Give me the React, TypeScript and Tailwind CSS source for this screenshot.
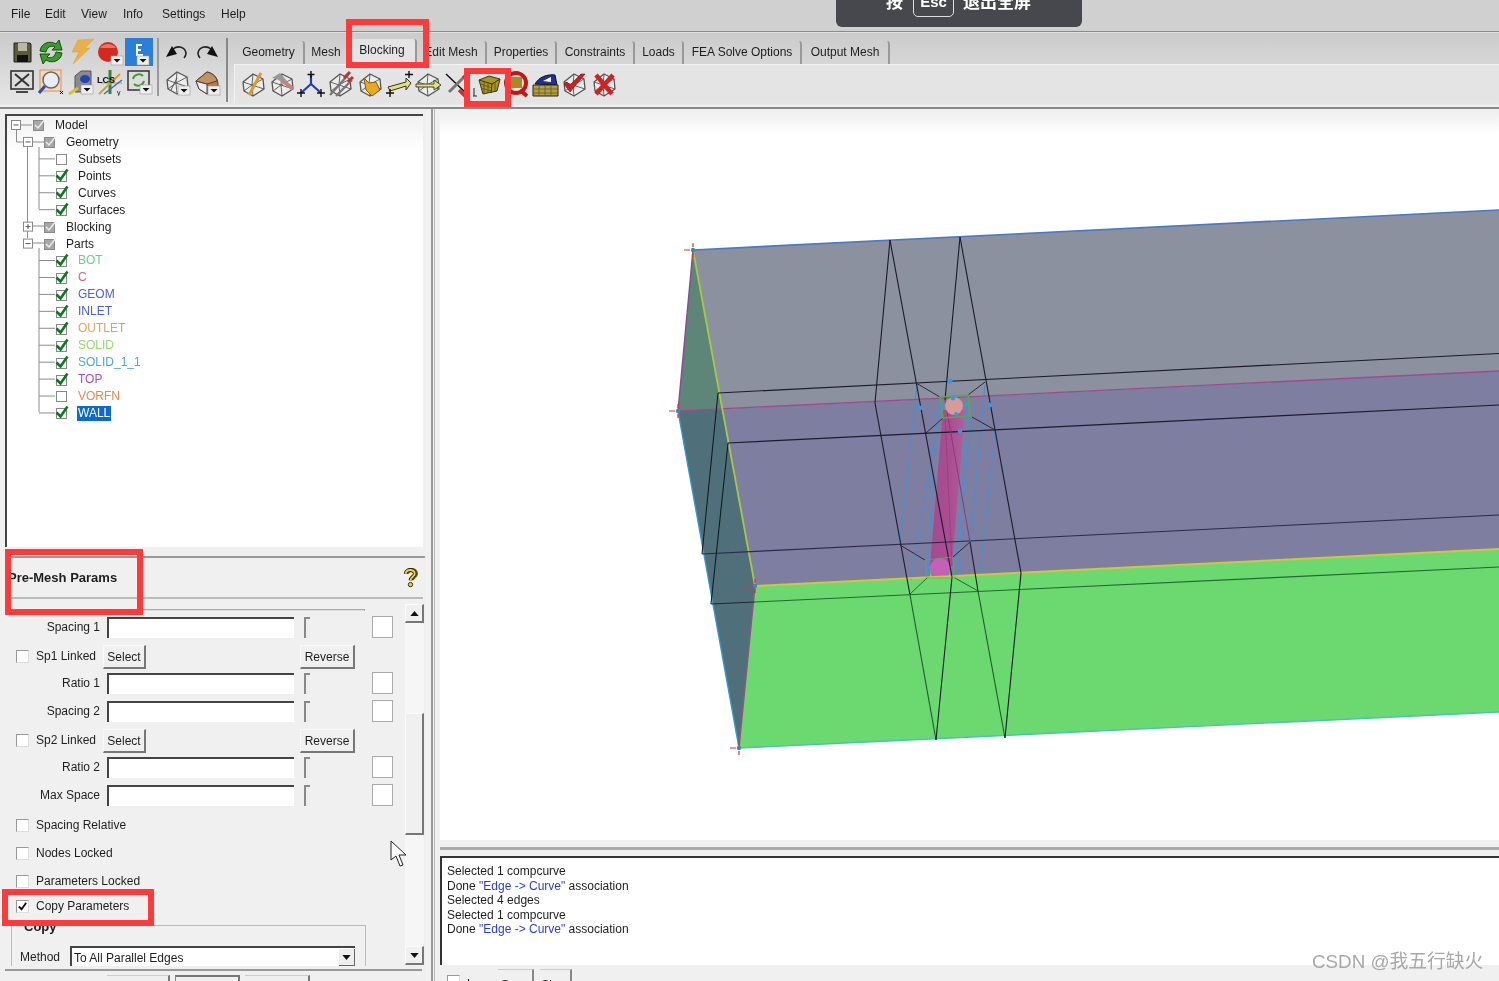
import React from "react";

const Wire = () => (
  <g fill="none" stroke="#555" strokeWidth="1.3" strokeLinejoin="round">
    <path d="M4 12 L14 4 L24 9 L25 19 L14 26 L5 21 Z" fill="#ececec" />
    <path d="M4 12 L13 15 L24 9 M13 15 L14 26 M14 4 L13 15 M5 21 L13 15 L25 19" strokeWidth="0.9" />
  </g>
);
const Drop = ({ x = 15, y = 17 }: { x?: number; y?: number }) => (
  <g>
    <rect x={x} y={y} width="12" height="9" fill="#eee" stroke="#999" strokeWidth="0.6" />
    <path d={`M${x + 2.5} ${y + 3} h7 l-3.5 3.5 z`} fill="#111" />
  </g>
);
const S = ({ children }: { children: React.ReactNode }) => (
  <svg viewBox="0 0 28 28" className="w-[28px] h-[28px] block">{children}</svg>
);

const topRow = [
  <S key="save"><path d="M6 5h16l1 1v18H6z" fill="#5b5a3a" stroke="#222" /><rect x="10" y="5" width="9" height="8" fill="#b9b9a0" /><rect x="9" y="17" width="11" height="7" fill="#111" /></S>,
  <S key="ref"><path d="M3 13 C4 5 13 2 19 6 L22 2 L25 12 L15 12 L18 9 C14 7 10 9 9 14 Z" fill="#3d9a2c" stroke="#12500f" /><path d="M25 15 C24 23 15 26 9 22 L6 26 L3 16 L13 16 L10 19 C14 21 18 19 19 14 Z" fill="#3d9a2c" stroke="#12500f" /></S>,
  <S key="bolt"><path d="M11 2 L27 1 L18 10 L23 10 L6 26 L12 14 L5 14 Z" fill="#e8b04a" stroke="#d8a040" strokeWidth="0.5" /></S>,
  <S key="rec"><circle cx="12" cy="14" r="10" fill="#d42a1e" /><path d="M4 10a10 10 0 0 1 16 0z" fill="#e8746a" /><Drop y={18} /></S>,
  <S key="e"><rect x="-1" width="29" height="28" fill="#2a7fd8" /><path d="M11 6h6v2h-4v3h3v2h-3v3h5v2h-7z" fill="#fff" /><Drop x={12} y={18} /></S>,
];
const botRow = [
  <S key="fit"><rect x="3" y="3" width="22" height="18" fill="#ddd" stroke="#333" strokeWidth="1.6" /><path d="M14 12 L7 6 M14 12 L21 6 M14 12 L7 18 M14 12 L21 18" stroke="#333" strokeWidth="2" /><rect x="8" y="23" width="12" height="2" fill="#444" /></S>,
  <S key="zoom"><rect x="3" y="2" width="21" height="21" fill="#f4d9b8" stroke="#d89060" /><circle cx="14" cy="12" r="8" fill="#e8edf2" stroke="#666" strokeWidth="1.5" /><path d="M8 18 L2 25" stroke="#2b4fb0" strokeWidth="3" /><path d="M23 23l3 3m0-3l-3 3" stroke="#111" /></S>,
  <S key="meas"><path d="M8 22 V8 L14 3 H24 V24 H8" fill="#8b8b8b" stroke="#555" /><ellipse cx="18" cy="11" rx="5" ry="4" fill="#1d45b5" /><path d="M2 26 L11 20" stroke="#d8c030" strokeWidth="3" /><Drop x={14} y={17} /></S>,
  <S key="lcs"><path d="M14 2V26" stroke="#2e8b2e" strokeWidth="3" /><path d="M3 26 L24 6" stroke="#d89a30" strokeWidth="2" /><path d="M5 15 H26" stroke="#999" /><path d="M8 26 L26 12" stroke="#5060c0" strokeWidth="1.5" /><text x="1" y="15" fontSize="9" fontWeight="700" fill="#111" fontFamily="Liberation Sans">LCS</text><text x="21" y="27" fontSize="7" fill="#111" fontFamily="Liberation Sans">y</text></S>,
  <S key="rb"><rect x="3" y="3" width="21" height="19" fill="#ddd" stroke="#333" strokeWidth="1.5" /><path d="M8 11a6 6 0 0 1 10-3M19 13a6 6 0 0 1-10 3" stroke="#3d9a2c" strokeWidth="2" fill="none" /><Drop y={17} /></S>,
];
const Arrow = ({ flip }: { flip?: boolean }) => (
  <S>
    <g transform={flip ? "matrix(-1 0 0 1 28 0)" : undefined}>
      <path d="M10 11 C15 7 22 9 23 15 C23 17 22 19 21 20" fill="none" stroke="#222" strokeWidth="1.6" />
      <path d="M3 19 L9 8 L14 16 Z" fill="#111" />
    </g>
  </S>
);
const wires = [
  <S key="w"><Wire /><g fill="none" stroke="#555" strokeWidth="1"><path d="M14 10 L8 22" /></g><Drop y={18} /></S>,
  <S key="s"><path d="M3 13 L14 4 C20 5 25 10 25 16 L25 22 L14 26 L6 21 Z" fill="#b87a40" stroke="#444" /><path d="M3 13 L14 16 L14 26 L6 21Z" fill="#eee" stroke="#444" /><path d="M14 4 C20 5 24 10 24 13 L14 16 L3 13Z" fill="#c8905a" stroke="#444" /><Drop y={18} /></S>,
];

const blockIcons = [
  <S key="1"><Wire /><path d="M22 3 L10 25" stroke="#d89a30" strokeWidth="3" /></S>,
  <S key="2"><Wire /><path d="M9 6 L25 19" stroke="#c98080" strokeWidth="4" /><path d="M4 8 L12 3 L20 12" fill="#999" /></S>,
  <S key="3"><path d="M14 14 L14 4 M14 14 L4 23 M14 14 L24 23" stroke="#1f3fb0" strokeWidth="2.2" fill="none" /><g stroke="#111" strokeWidth="1.4"><path d="M14 1v7M10.500 4.500h7M4 19v8M0 23h8M24 19v8M20 23h8" /></g></S>,
  <S key="4"><Wire /><path d="M4 25 L22 5 M10 26 L26 10" stroke="#777" strokeWidth="2.4" /><path d="M18 8 L24 2 M22 12 L27 7" stroke="#c83030" strokeWidth="3" /></S>,
  <S key="5"><Wire /><path d="M8 8 L13 13 L20 12 L24 20 L16 26 L10 20 Z" fill="#e8a820" stroke="#8a5a10" /></S>,
  <S key="6"><path d="M3 17 L21 12 L21 8 L26 13 L21 20 L21 16 L5 21Z" fill="#e8e070" stroke="#333" /><g stroke="#111" strokeWidth="1.4"><path d="M24 1v7M20 4.500h8M5 19v8M1 23h8" /></g></S>,
  <S key="7"><Wire /><path d="M2 14 H20 V10 L27 15 L20 20 V17 H2Z" fill="#e8e070" stroke="#444" /></S>,
  <S key="8"><path d="M3 4 L24 24" stroke="#111" strokeWidth="1.5" /><path d="M24 4 L6 22" stroke="#777" strokeWidth="3" /><path d="M20 8 L26 3" stroke="#c83030" strokeWidth="3.4" /><path d="M16 20 L22 26" stroke="#c83030" strokeWidth="3.4" /></S>,
  <S key="9"><path d="M6 10 L16 6 L27 9 L24 21 L10 24 Z" fill="#a89520" stroke="#333" /><path d="M6 10 L19 14 L27 9 M19 14 L18 23" stroke="#3a3510" fill="none" /><path d="M8 14 L19 18 M8 18 L18 21 M11 12 L11 24 M15 12 L15 23 M22 12 V22" stroke="#5d5210" fill="none" strokeWidth="0.8" /><path d="M1 18 V26 M-1 26 H4" stroke="#222" /></S>,
  <S key="10"><circle cx="14" cy="13" r="10" fill="none" stroke="#c01818" strokeWidth="4" /><path d="M18 20 L25 26" stroke="#c01818" strokeWidth="4" /><rect x="8" y="7" width="12" height="11" fill="#a88a20" /></S>,
  <S key="11"><path d="M4 14 C8 7 16 4 24 5 L26 15 Z" fill="#2030a0" stroke="#111" /><path d="M12 11 L20 7 L20 12 Z" fill="#fff" /><path d="M2 15 H27 V26 H2Z" fill="#b8a030" stroke="#222" /><path d="M2 19 H27 M2 23 H27 M8 15V26 M14 15V26 M20 15V26" stroke="#555" strokeWidth="0.8" /></S>,
  <S key="12"><Wire /><path d="M4 14 L10 22 L25 4 L21 4 L10 15 L7 12 Z" fill="#d01c1c" stroke="#7a0c0c" strokeWidth="0.6" /></S>,
  <S key="13"><Wire /><path d="M6 5 L22 24 M23 5 L6 24" stroke="#d42020" strokeWidth="4.500" /></S>,
];

const Check = ({ kind }: { kind: "on" | "off" | "tri" }) => (
  <svg viewBox="0 0 14 14" className="w-[14px] h-[14px] block overflow-visible">
    {kind === "tri" ? (
      <>
        <rect x="1.500" y="2.500" width="10" height="10" fill="#a7a7a7" stroke="#888" />
        <path d="M3 7 L6 10 L13 1" fill="none" stroke="#eee" strokeWidth="1.4" />
      </>
    ) : (
      <>
        <rect x="1.500" y="2.500" width="10" height="10" fill="#fff" stroke="#888" />
        {kind === "on" && <path d="M1.500 6.500 L5.500 10.500 L12.500 0.500" fill="none" stroke="#0a7a1c" strokeWidth="2.6" />}
      </>
    )}
  </svg>
);

type Node = { l: number; c: "on" | "off" | "tri"; t: string; color?: string; sel?: boolean };
const tree: Node[] = [
  { l: 0, c: "tri", t: "Model" },
  { l: 1, c: "tri", t: "Geometry" },
  { l: 2, c: "off", t: "Subsets" },
  { l: 2, c: "on", t: "Points" },
  { l: 2, c: "on", t: "Curves" },
  { l: 2, c: "on", t: "Surfaces" },
  { l: 1, c: "tri", t: "Blocking" },
  { l: 1, c: "tri", t: "Parts" },
  { l: 2, c: "on", t: "BOT", color: "#66d38a" },
  { l: 2, c: "on", t: "C", color: "#d9608c" },
  { l: 2, c: "on", t: "GEOM", color: "#4a5fd8" },
  { l: 2, c: "on", t: "INLET", color: "#4a5fd8" },
  { l: 2, c: "on", t: "OUTLET", color: "#d0aa5a" },
  { l: 2, c: "on", t: "SOLID", color: "#9ad86a" },
  { l: 2, c: "on", t: "SOLID_1_1", color: "#4aa8d8" },
  { l: 2, c: "on", t: "TOP", color: "#a050d0" },
  { l: 2, c: "off", t: "VORFN", color: "#e88a50" },
  { l: 2, c: "on", t: "WALL", sel: true },
];

const TreeLines = () => {
  const ys = (i: number) => 125 + i * 16.94;
  const expand = [[16, 0, "-"], [28, 1, "-"], [28, 6, "+"], [28, 7, "-"]] as const;
  return (
    <svg viewBox="5 114 418 433" className="absolute inset-0 w-full h-full pointer-events-none">
      <g stroke="#8c8c8c" fill="none">
        <path d="M16.500 130V142 H23" />
        <path d="M27.500 147V238" />
        <path d="M39 147V209 M39 248V412" />
        <path d="M21 125H32 M33 142H44 M33 226H44 M33 243H44" />
        {[2, 3, 4, 5, 8, 9, 10, 11, 12, 13, 14, 15, 16, 17].map((i) => (
          <path key={i} d={`M39 ${ys(i)}H55`} />
        ))}
      </g>
      {expand.map(([x, i, s]) => (
        <g key={i}>
          <rect x={x - 4.5} y={ys(i) - 4.5} width="9" height="9" fill="#fff" stroke="#888" />
          <path d={`M${x - 2.5} ${ys(i)}h5${s === "+" ? `M${x} ${ys(i) - 2.5}v5` : ""}`} stroke="#555" />
        </g>
      ))}
    </svg>
  );
};

const Tree = () => (
  <div className="relative shrink-0 w-[418px] h-[433px] ml-[5px] mt-[5px] bg-gradient-to-b from-[#f1f1f1] to-[#ffffff] to-[8%] border-t-2 border-l-2 border-[#444] overflow-hidden">
    <div className="absolute inset-0 -top-[2px] -left-[2px]"><TreeLines /></div>
    <div className="relative pt-[1px]">
      {tree.map((n) => (
        <div key={n.t} className="h-[16.94px] flex items-center">
          <div className={n.l === 0 ? "w-[25px]" : n.l === 1 ? "w-[36px]" : "w-[48px]"} />
          <Check kind={n.c} />
          <div className="w-[9px]" />
          <span
            className={
              n.sel
                ? "bg-[#0a6ad0] text-white px-[1px] h-[15px] leading-[15px] ml-[-1px]"
                : "leading-[15px]"
            }
            style={n.color ? { color: n.color } : undefined}
          >
            {n.t}
          </span>
        </div>
      ))}
    </div>
  </div>
);

const Box = () => <div className="w-[13px] h-[13px] bg-white border border-[#999] border-r-[#ddd] border-b-[#ddd]" />;
const Btn = ({ children, w }: { children: React.ReactNode; w: string }) => (
  <div className={`${w} h-[24px] flex items-center justify-center bg-[#f0f0f0] border border-[#f8f8f8] border-r-2 border-b-2 border-r-[#777] border-b-[#777]`}>{children}</div>
);

const Field = ({ label, h }: { label: string; h: string }) => (
  <div className={`${h} flex items-center`}>
    <div className="w-[95px] text-right shrink-0">{label}</div>
    <div className="w-[187px] h-[21px] ml-[7px] bg-white border-t-2 border-l-2 border-[#444]" />
    <div className="w-[6px] h-[21px] ml-[10px] bg-[#eee] border-t-2 border-l-2 border-[#888]" />
    <div className="w-[21px] h-[22px] ml-[62px] bg-white border border-[#aaa]" />
  </div>
);
const Linked = ({ label, h }: { label: string; h: string }) => (
  <div className={`${h} flex items-center`}>
    <div className="ml-[11px] -mt-[2px]"><Box /></div>
    <div className="ml-[7px] w-[67px] -mt-[2px]">{label}</div>
    <Btn w="w-[43px]">Select</Btn>
    <div className="w-[154px]" />
    <Btn w="w-[55px]">Reverse</Btn>
  </div>
);
const CheckRow = ({ label, h }: { label: string; h: string }) => (
  <div className={`${h} flex items-center`}>
    <div className="ml-[11px]"><Box /></div>
    <div className="ml-[7px]">{label}</div>
  </div>
);

const ScrollBtn = ({ up }: { up?: boolean }) => (
  <div className="w-[19px] h-[19px] bg-[#f0f0f0] border border-[#fafafa] border-r-2 border-b-2 border-r-[#777] border-b-[#777] flex items-center justify-center">
    <svg viewBox="0 0 10 6" className="w-[9px] h-[5px]"><path d={up ? "M0 6 L5 0 L10 6Z" : "M0 0 L5 6 L10 0Z"} fill="#111" /></svg>
  </div>
);

const Form = () => (
  <div className="flex shrink-0 mt-[5px] h-[362px] ml-[5px]">
    <div className="w-[397px] overflow-hidden">
      <div className="h-[2px] w-[360px] border-t border-r border-[#aaa] mt-[5px] bg-[#ddd]" />
      <Field label="Spacing 1" h="h-[32px]" />
      <Linked label="Sp1 Linked" h="h-[28px]" />
      <Field label="Ratio 1" h="h-[24px]" />
      <Field label="Spacing 2" h="h-[32px]" />
      <Linked label="Sp2 Linked" h="h-[28px]" />
      <Field label="Ratio 2" h="h-[24px]" />
      <Field label="Max Space" h="h-[32px]" />
      <CheckRow label="Spacing Relative" h="h-[28px]" />
      <CheckRow label="Nodes Locked" h="h-[28px]" />
      <CheckRow label="Parameters Locked" h="h-[28px]" />
      <div className="h-[22px] flex items-center">
        <div className="ml-[11px] relative">
          <Box />
          <svg viewBox="0 0 12 12" className="absolute left-[1px] top-[1px] w-[11px] h-[11px]"><path d="M2 6 L5 9 L10 2" fill="none" stroke="#111" strokeWidth="2" /></svg>
        </div>
        <div className="ml-[7px]">Copy Parameters</div>
      </div>
      <div className="relative ml-[6px] w-[355px] h-[50px] border border-[#bbb] border-b-0 mt-[8px]">
        <span className="absolute left-[12px] -top-[6px] font-bold leading-[14px] text-[13px]">Copy</span>
        <div className="flex items-center mt-[20px]">
          <span className="ml-[8px] w-[50px]">Method</span>
          <div className="w-[285px] h-[21px] bg-white border-t-2 border-l-2 border-[#444] flex items-center justify-between pl-[2px]">
            <span>To All Parallel Edges</span>
            <div className="w-[16px] h-[17px] bg-[#eee] border-r border-b border-[#666] flex items-center justify-center">
              <svg viewBox="0 0 10 6" className="w-[9px] h-[5px]"><path d="M0 0 L5 6 L10 0Z" fill="#111" /></svg>
            </div>
          </div>
        </div>
      </div>
    </div>
    <div className="w-[19px] ml-[3px] h-[361px] bg-[#f6f6f6] flex flex-col justify-between relative">
      <ScrollBtn up />
      <div className="absolute left-0 top-[109px] w-[19px] h-[122px] bg-[#f0f0f0] border border-[#fafafa] border-r-2 border-b-2 border-r-[#777] border-b-[#777]" />
      <ScrollBtn />
    </div>
  </div>
);

const Line = ({ p, c = "#1c1a2c", w = 1.1 }: { p: string; c?: string; w?: number }) => (
  <polyline points={p} fill="none" stroke={c} strokeWidth={w} />
);

const Corner = ({ x, y }: { x: number; y: number }) => (
  <g>
    <path d={`M${x - 9} ${y}h6M${x} ${y - 7}v4M${x} ${y + 3}v4`} stroke="#e03030" strokeWidth="1.2" />
    <circle cx={x} cy={y} r="2.2" fill="#3a8ab0" />
  </g>
);

const Viewport = () => (
  <svg viewBox="440 112 1059 728" className="block w-full h-full">
    <defs>
      <linearGradient id="bg" x1="0" y1="0" x2="0" y2="1">
        <stop offset="0" stopColor="#efefef" />
        <stop offset="0.03" stopColor="#fff" />
      </linearGradient>
      <linearGradient id="cyl" x1="0" y1="0" x2="1" y2="0">
        <stop offset="0" stopColor="#a24a90" />
        <stop offset="0.6" stopColor="#ac4e92" />
        <stop offset="1" stopColor="#b0609e" />
      </linearGradient>
    </defs>
    <rect x="440" y="112" width="1059" height="728" fill="url(#bg)" />
    <polygon points="693,250 1499,210 1499,371 722,409" fill="#8b919e" />
    <polygon points="722,409 1499,371 1499,549 755,586" fill="#7e7ea0" />
    <polygon points="755,586 1499,549 1499,712 739,748" fill="#6bd970" />
    <polygon points="693,250 678,411 722,409" fill="#5e8678" />
    <polygon points="678,411 722,409 755,586 739,748" fill="#4f707a" />

    {/* blue edges */}
    <g stroke="#4a8ed0" strokeWidth="1.3" fill="none" opacity="0.85">
      <path d="M917 385L900 545M940 405L911 580M936 412L928 575M967 405L958 575M985 385L970 545M995 432L980 573M972 418L955 563" />
    </g>

    {/* cylinder */}
    <polygon points="943,410 965,410 952,566 930,566" fill="url(#cyl)" />
    <path d="M945 415L952 566" stroke="#8e3f80" strokeWidth="0.8" fill="none" />
    <circle cx="940" cy="568" r="10" fill="#c460b8" />
    <path d="M930 570 a10 10 0 0 0 20 0 v8 h-20z" fill="#6bd970" />

    {/* edges */}
    <Line p="693,250 1499,210" c="#4a78c8" w={1.6} />
    <Line p="678,411 1499,371" c="#a04a8a" w={1.3} />
    <Line p="755,586 1499,549" c="#d8c040" w={2} />
    <Line p="739,748 1499,712" c="#40c8b0" w={1.4} />
    <Line p="693,250 755,586" c="#a8c840" w={1.8} />
    <Line p="693,250 678,411" c="#8a4a90" w={1.4} />
    <Line p="678,411 739,748" c="#3a98c8" w={1.4} />
    <Line p="755,586 739,748" c="#a04a8a" w={1.4} />

    {/* mesh */}
    <Line p="718,393 1499,353.500" />
    <Line p="728,443 1499,405" />
    <Line p="702,554 1499,515" c="#2e2850" />
    <Line p="711,604 755,602" c="#1c2830" />
    <Line p="755,602 1499,567" c="#1f6a30" />
    <Line p="718,393 702,554" c="#141a24" />
    <Line p="728,443 711,604" c="#141a24" />
    <Line p="890,240 875,403 910,595" />
    <Line p="910,595 936,740" c="#1f5a2c" />
    <Line p="890,240 952,577 936,740" />
    <Line p="960,237 945,400" />
    <Line p="945,400 970,542" c="#7a3a78" w={0.9} />
    <Line p="970,542 978,591" />
    <Line p="978,591 1005,738" c="#1f5a2c" />
    <Line p="960,237 1021,573 1005,738" />
    <g stroke="#2a2a3a" strokeWidth="1" fill="none">
      <path d="M916 383L940 397M985 382L968 395M926 433L943 418M995 430L972 417M900 545L925 560M970 542L953 557" />
    </g>
    <path d="M927 578L909 595M955 578L978 591" stroke="#1f6a30" strokeWidth="1" fill="none" />

    {/* ogrid */}
    <circle cx="954" cy="406" r="9" fill="#d89a98" />
    <polygon points="940,397 968,395 970,416 943,418" fill="none" stroke="#4cb04c" strokeWidth="1.6" />
    <polygon points="925,560 953,557 955,578 927,578" fill="none" stroke="#55b060" strokeWidth="0.7" />
    <g fill="#3a98e0">
      {[[950, 381, 2.6], [920, 408, 2.4], [990, 405, 2.4], [960, 431, 2.4], [953, 398, 2.4], [966, 405, 2], [942, 406, 2], [956, 414, 2], [928, 568, 2]].map(([x, y, r]) => (
        <circle key={`${x}-${y}`} cx={x} cy={y} r={r} />
      ))}
    </g>

    <Corner x={693} y={250} />
    <Corner x={678} y={411} />
    <Corner x={739} y={748} />
    <Corner x={755} y={586} />
  </svg>
);

const Red = ({ c }: { c: string }) => <div className={`absolute border-[6px] border-[#ff3a3a] ${c}`} />;

export default function App() {
  return (
    <div className="relative w-[1499px] h-[981px] overflow-hidden bg-[#f0f0f0] flex flex-col text-[12px] text-[#1e1e1e] blur-[0.35px] font-['Liberation_Sans','Noto_Sans_CJK_SC',sans-serif]">
      {/* menu */}
      <div className="h-[31px] shrink-0 bg-[#d0d0d0] flex items-center pl-[11px] pb-[3px]">
        <span className="w-[34px]">File</span>
        <span className="w-[36px]">Edit</span>
        <span className="w-[42px]">View</span>
        <span className="w-[39px]">Info</span>
        <span className="w-[59px]">Settings</span>
        <span>Help</span>
      </div>
      <div className="h-[2px] shrink-0 bg-[#8a8a8a] border-b border-[#e0e0e0]" />
      {/* toolbar */}
      <div className="h-[72px] shrink-0 flex bg-gradient-to-b from-[#cbcbcb] to-[#e6e6e6]">
        <div className="flex pl-[8px] pt-[5px]">
          <div className="flex flex-col gap-[2px] w-[145px]">
            <div className="flex justify-between">{topRow}</div>
            <div className="flex justify-between">{botRow}</div>
          </div>
          <div className="w-[2px] h-[58px] ml-[4px] bg-[#999]" />
          <div className="flex flex-col gap-[2px] w-[58px] ml-[4px]">
            <div className="flex justify-between"><Arrow /><Arrow flip /></div>
            <div className="flex justify-between">{wires}</div>
          </div>
          <div className="w-[2px] h-[64px] ml-[5px] bg-[#888]" />
        </div>
        <div className="flex-1 ml-[6px] flex flex-col">
          <div className="h-[31px] flex items-end">
            {[
              ["Geometry", "w-[71px]"],
              ["Mesh", "w-[44px]"],
              ["Blocking", "w-[68px]"],
              ["Edit Mesh", "w-[70px]"],
              ["Properties", "w-[70px]"],
              ["Constraints", "w-[78px]"],
              ["Loads", "w-[49px]"],
              ["FEA Solve Options", "w-[118px]"],
              ["Output Mesh", "w-[88px]"],
            ].map(([t, w]) => (
              <div
                key={t}
                className={`${w} flex items-center justify-center rounded-tr-[3px] border-r-2 border-[#999] ${t === "Blocking" ? "h-[25px] pb-[3px] bg-[#e4e4e4]" : "h-[23px] pb-[2px]"}`}
              >
                {t}
              </div>
            ))}
          </div>
          <div className="h-[39px] bg-[#e4e4e4] border-t border-l border-[#f2f2f2] flex items-center pl-[3px]">
            {blockIcons.map((ic, i) => (
              <div key={i} className="w-[29.25px] flex justify-center">{ic}</div>
            ))}
          </div>
        </div>
      </div>
      <div className="h-[2px] shrink-0 bg-[#888] mt-[2px]" />
      {/* main */}
      <div className="flex-1 min-h-0 flex">
        <div className="w-[428px] shrink-0 flex flex-col">
          <Tree />
          <div className="h-[2px] shrink-0 mt-[9px] ml-[5px] w-[420px] bg-[#999]" />
          <div className="h-[39px] shrink-0 ml-[5px] w-[418px] flex items-center justify-between pr-[4px]">
            <span className="font-bold text-[13px] pl-[3px]">Pre-Mesh Params</span>
            <svg viewBox="0 0 18 22" className="w-[17px] h-[21px]">
              <path d="M5.500 7 C5.500 2 15 1.500 15 7 C15 10 10.500 10.500 10.500 14" fill="none" stroke="#7a5a20" strokeWidth="4" />
              <path d="M4 7 C4 2 13.500 1.500 13.500 7 C13.500 10 9 10.500 9 14" fill="none" stroke="#222" strokeWidth="4" />
              <path d="M4 7 C4 2 13.500 1.500 13.500 7 C13.500 10 9 10.500 9 14" fill="none" stroke="#f0d820" strokeWidth="2" />
              <circle cx="9" cy="18.500" r="2.300" fill="#f0d820" stroke="#222" />
            </svg>
          </div>
          <div className="h-[2px] shrink-0 ml-[5px] w-[418px] bg-[#bbb]" />
          <Form />
          <div className="h-[2px] shrink-0 mt-[3px] ml-[5px] w-[417px] bg-[#999]" />
          <div className="flex ml-[107px] mt-[4px] gap-[5px]">
            <div className="w-[63px] h-[20px] bg-[#efefef] border-t border-[#ccc] border-r-2 border-r-[#777]" />
            <div className="w-[65px] h-[20px] bg-[#efefef] border-t-2 border-[#777] border-r-2 border-r-[#777] border-l border-l-[#888]" />
            <div className="w-[65px] h-[20px] bg-[#efefef] border-t border-[#ccc] border-r-2 border-r-[#777]" />
          </div>
        </div>
        <div className="w-[10px] shrink-0 flex justify-center">
          <div className="w-[4px] h-full border-l-2 border-r border-[#999] border-r-[#bbb]" />
        </div>
        <div className="flex-1 min-w-0 flex flex-col pl-[2px]">
          <div className="h-[728px] shrink-0 mt-[3px]"><Viewport /></div>
          <div className="h-[3px] shrink-0 mt-[7px] bg-[#aaa]" />
          <div className="h-[109px] shrink-0 mt-[6px] bg-white border-t-2 border-l-2 border-[#333] pl-[5px] pt-[6px] leading-[14.6px]">
            <div>Selected 1 compcurve</div>
            <div>Done <span className="text-[#2a3fd0]">"Edge -&gt; Curve"</span> association</div>
            <div>Selected 4 edges</div>
            <div>Selected 1 compcurve</div>
            <div>Done <span className="text-[#2a3fd0]">"Edge -&gt; Curve"</span> association</div>
          </div>
          <div className="flex items-start pt-[4px] pl-[7px]">
            <div className="mt-[6px]"><Box /></div>
            <span className="ml-[7px] w-[31px] mt-[6px]">Log</span>
            <div className="w-[36px] h-[20px] pt-[6px] text-center border-r-2 border-t border-[#888] border-t-[#ccc]">Save</div>
            <div className="w-[32px] h-[20px] pt-[6px] ml-[6px] text-center border-r-2 border-t border-[#888] border-t-[#ccc]">Clear</div>
          </div>
        </div>
      </div>

      {/* fullscreen hint */}
      <div className="absolute left-[836px] top-0 w-[246px] h-[27px] rounded-b-[6px] bg-[#46484d] overflow-hidden text-white font-bold text-[17px]">
        <div className="flex items-center absolute -top-[12px] left-[50px]">
          <span>按</span>
          <span className="ml-[10px] w-[41px] h-[29px] border border-[#ddd] rounded-[5px] flex items-center justify-center text-[15px]">Esc</span>
          <span className="ml-[9px]">退出全屏</span>
        </div>
      </div>

      {/* annotations */}
      <Red c="left-[346px] top-[19px] w-[83px] h-[49px]" />
      <Red c="left-[464px] top-[68px] w-[47px] h-[39px]" />
      <Red c="left-[5px] top-[549px] w-[138px] h-[66px]" />
      <Red c="left-[2px] top-[889px] w-[152px] h-[37px]" />

      {/* cursor */}
      <svg viewBox="0 0 18 28" className="absolute left-[390px] top-[840px] w-[18px] h-[28px]">
        <path d="M1 1 L1 20 L6 16 L10 26 L13 25 L9 15 L16 15 Z" fill="#fff" stroke="#222" strokeWidth="1" />
      </svg>

      {/* watermark */}
      <div className="absolute left-[1312px] top-[948px] text-[18.800px] leading-[28px] text-[#a8a8a8] whitespace-nowrap">CSDN @我五行缺火</div>
    </div>
  );
}
